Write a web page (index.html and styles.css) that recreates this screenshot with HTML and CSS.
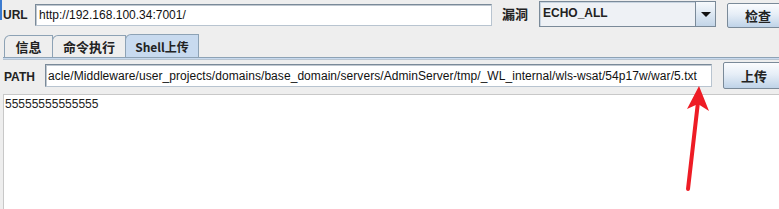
FILE: index.html
```html
<!DOCTYPE html>
<html>
<head>
<meta charset="utf-8">
<link rel="stylesheet" href="styles.css">
</head>
<body>
<div class="app">
  <div class="edge"></div>
  <div class="toprow">
    <span class="lbl url-lbl">URL</span>
    <div class="field url-field">http://192.168.100.34:7001/</div>
    <span class="lbl cjk vuln-lbl">漏洞</span>
    <div class="combo">
      <div class="combo-text">ECHO_ALL</div>
      <div class="combo-btn"><span class="tri"></span></div>
    </div>
    <div class="btn check-btn cjk">检查</div>
  </div>
  <div class="tabs">
    <div class="tab cjk t1">信息</div>
    <div class="tab cjk t2">命令执行</div>
    <div class="tab cjk t3 sel">Shell上传</div>
  </div>
  <div class="tabline"></div>
  <div class="pathrow">
    <span class="lbl path-lbl">PATH</span>
    <div class="field path-field">acle/Middleware/user_projects/domains/base_domain/servers/AdminServer/tmp/_WL_internal/wls-wsat/54p17w/war/5.txt</div>
    <div class="btn up-btn cjk">上传</div>
  </div>
  <div class="output">55555555555555</div>
  <svg class="arrow" width="40" height="110" viewBox="0 0 40 110">
    <line x1="9" y1="105" x2="19" y2="18" stroke="#ee1c25" stroke-width="4" stroke-linecap="round"/>
    <polygon points="20,2 30,27 19,20 8,25" fill="#ee1c25"/>
  </svg>
</div>
</body>
</html>
```
FILE: styles.css
```css
html, body {
  margin: 0;
  padding: 0;
  background: #eeeeee;
}
.app {
  position: relative;
  width: 779px;
  height: 209px;
  overflow: hidden;
  background: #eeeeee;
  font-family: "Liberation Sans", Arial, "Noto Sans CJK SC", sans-serif;
  font-size: 12px;
  color: #000;
  display: flex;
  flex-direction: column;
}
.app * {
  flex-shrink: 0;
}
.edge {
  position: absolute;
  left: 0;
  top: 0;
  width: 2px;
  height: 20px;
  background: #3b7bd0;
}
.cjk {
  font-family: "Noto Sans CJK SC", "Liberation Sans", sans-serif;
}
.lbl {
  font-weight: bold;
  color: #222;
}
.toprow {
  display: flex;
  align-items: flex-start;
  height: 33px;
  padding-left: 3px;
  box-sizing: border-box;
}
.url-lbl {
  width: 32px;
  margin-top: 8px;
  font-size: 12px;
}
.field {
  box-sizing: border-box;
  background: #fff;
  border: 1px solid #7a8a99;
  white-space: nowrap;
  overflow: hidden;
  color: #111;
  font-size: 12px;
}
.url-field {
  width: 457px;
  height: 22px;
  margin-top: 4px;
  padding: 3px 0 0 3px;
  border-right-color: #b8c4d0;
  border-bottom-color: #b8c4d0;
  box-shadow: inset 1px 1px 0 #c0c8d0;
}
.vuln-lbl {
  margin-left: 10px;
  width: 37px;
  margin-top: 4px;
  font-size: 13px;
}
.combo {
  display: flex;
  width: 177px;
  height: 26px;
  margin-top: 1px;
  box-sizing: border-box;
  border: 1px solid #7a8a99;
}
.combo-text {
  flex: 1;
  background: #eef1f5;
  font-weight: bold;
  padding: 4px 0 0 3px;
  font-size: 12px;
  color: #222;
  border-right: 1px solid #7a8a99;
  box-shadow: inset 1px 1px 0 #c8d4e0;
}
.combo-btn {
  width: 19px;
  background: linear-gradient(#f6f9fc, #c3d5e8);
  display: flex;
  align-items: center;
  justify-content: center;
}
.tri {
  width: 0;
  height: 0;
  border-left: 5px solid transparent;
  border-right: 5px solid transparent;
  border-top: 5px solid #111;
}
.btn {
  box-sizing: border-box;
  border: 1px solid #7a8a99;
  border-radius: 2px;
  background: linear-gradient(#fbfcfe 0%, #e6eef7 45%, #bfd3e8 100%);
  font-weight: bold;
  color: #222;
  display: flex;
  align-items: center;
  justify-content: center;
  font-size: 13px;
}
.check-btn {
  margin-left: 11px;
  width: 62px;
  height: 25px;
  margin-top: 3px;
}
.tabs {
  display: flex;
  padding-left: 4px;
  height: 24px;
  box-sizing: border-box;
  align-items: flex-end;
}
.tab {
  box-sizing: border-box;
  height: 22px;
  border: 1px solid #8da2b5;
  border-bottom: none;
  border-top-left-radius: 6px 6px;
  background: #eeeeee;
  font-weight: bold;
  font-size: 13px;
  color: #222;
  display: flex;
  align-items: center;
  justify-content: center;
  margin-right: -1px;
}
.t1 { width: 49px; }
.t2 { width: 74px; }
.t3 { width: 74px; font-size: 12px; }
.sel {
  background: #c8daef;
  height: 23px;
}
.tabline {
  margin-left: 3px;
  height: 3px;
  border-top: 1px solid #8da2b5;
  background: #c8daef;
  box-sizing: border-box;
  border-bottom: 1px solid #b8c4d0;
}
.pathrow {
  display: flex;
  align-items: flex-start;
  height: 34px;
  padding-left: 4px;
  box-sizing: border-box;
}
.path-lbl {
  width: 41px;
  margin-top: 10px;
  font-size: 12px;
}
.path-field {
  width: 667px;
  height: 23px;
  margin-top: 4px;
  padding: 4px 0 0 2px;
  letter-spacing: 0.06px;
  border-right-color: #b8c4d0;
  border-bottom-color: #b8c4d0;
  box-shadow: inset 1px 1px 0 #c0c8d0;
}
.up-btn {
  margin-left: 11px;
  width: 62px;
  height: 27px;
  margin-top: 2px;
}
.output {
  flex: 1;
  margin-left: 3px;
  background: #fff;
  border-top: 1px solid #c8c8c8;
  border-left: 1px solid #c8c8c8;
  padding: 2px 0 0 1px;
  font-size: 12px;
  color: #222;
}
.arrow {
  position: absolute;
  left: 679px;
  top: 84px;
}
```
